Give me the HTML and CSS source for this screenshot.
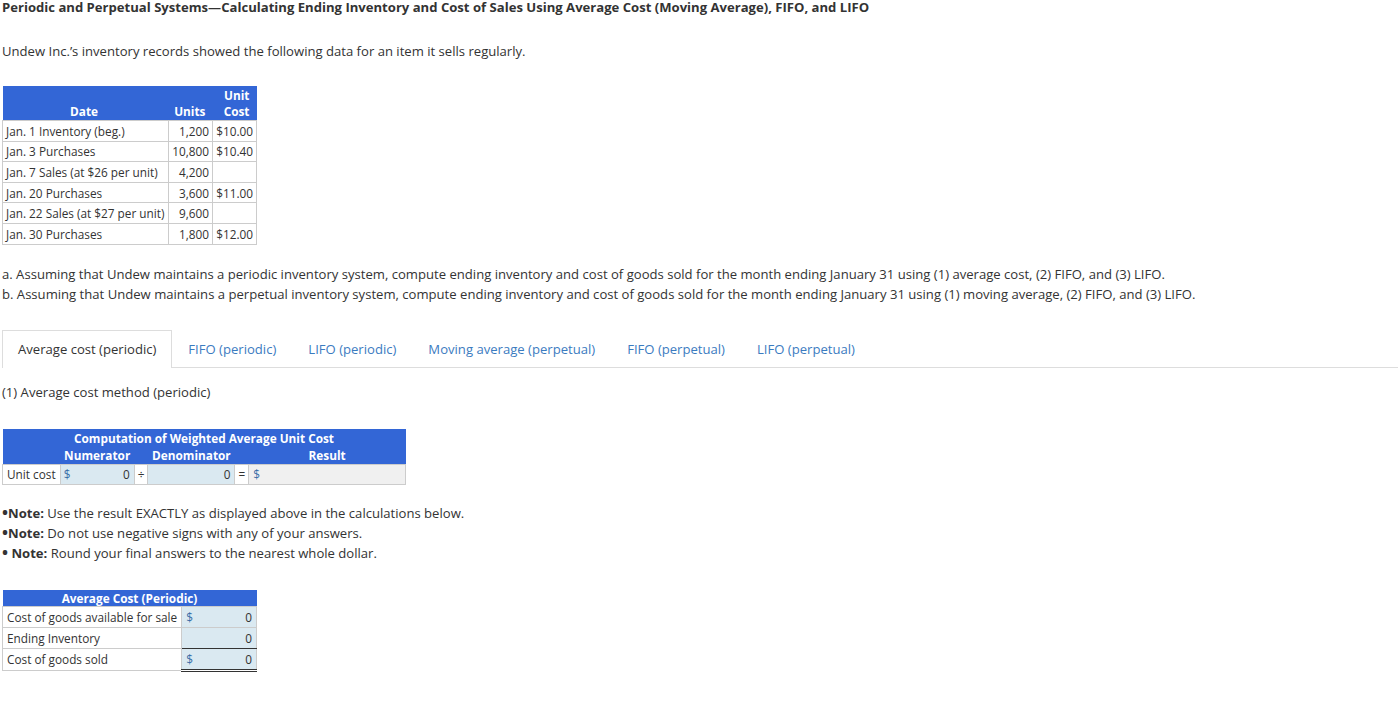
FILE: index.html
```html
<!DOCTYPE html>
<html>
<head>
<meta charset="utf-8">
<link rel="stylesheet" href="styles.css">
</head>
<body>
<h1 class="title">Periodic and Perpetual Systems—Calculating Ending Inventory and Cost of Sales Using Average Cost (Moving Average), FIFO, and LIFO</h1>
<p class="intro">Undew Inc.’s inventory records showed the following data for an item it sells regularly.</p>

<table class="data">
  <thead>
    <tr><th class="c-date">Date</th><th class="c-units">Units</th><th class="c-cost">Unit<br>Cost</th></tr>
  </thead>
  <tbody>
    <tr><td>Jan. 1 Inventory (beg.)</td><td class="num">1,200</td><td class="num">$10.00</td></tr>
    <tr><td>Jan. 3 Purchases</td><td class="num">10,800</td><td class="num">$10.40</td></tr>
    <tr><td>Jan. 7 Sales (at $26 per unit)</td><td class="num">4,200</td><td></td></tr>
    <tr><td>Jan. 20 Purchases</td><td class="num">3,600</td><td class="num">$11.00</td></tr>
    <tr><td>Jan. 22 Sales (at $27 per unit)</td><td class="num">9,600</td><td></td></tr>
    <tr><td>Jan. 30 Purchases</td><td class="num">1,800</td><td class="num">$12.00</td></tr>
  </tbody>
</table>

<div class="questions">
  <p>a. Assuming that Undew maintains a periodic inventory system, compute ending inventory and cost of goods sold for the month ending January 31 using (1) average cost, (2) FIFO, and (3) LIFO.</p>
  <p>b. Assuming that Undew maintains a perpetual inventory system, compute ending inventory and cost of goods sold for the month ending January 31 using (1) moving average, (2) FIFO, and (3) LIFO.</p>
</div>

<div class="tabs">
  <div class="tab active">Average cost (periodic)</div>
  <div class="tab">FIFO (periodic)</div>
  <div class="tab">LIFO (periodic)</div>
  <div class="tab">Moving average (perpetual)</div>
  <div class="tab">FIFO (perpetual)</div>
  <div class="tab">LIFO (perpetual)</div>
</div>

<p class="section">(1) Average cost method (periodic)</p>

<table class="calc">
  <thead>
    <tr><th colspan="6" class="h-title">Computation of Weighted Average Unit Cost</th></tr>
    <tr><th></th><th>Numerator</th><th></th><th>Denominator</th><th></th><th class="h-result">Result</th></tr>
  </thead>
  <tbody>
    <tr>
      <td class="lbl">Unit cost</td>
      <td class="input"><span class="cur">$</span><span class="val">0</span></td>
      <td class="op">÷</td>
      <td class="input den"><span class="val">0</span></td>
      <td class="op">=</td>
      <td class="result"><span class="cur">$</span></td>
    </tr>
  </tbody>
</table>

<div class="notes">
  <p><span class="bullet">•</span><b>Note:</b> Use the result EXACTLY as displayed above in the calculations below.</p>
  <p><span class="bullet">•</span><b>Note:</b> Do not use negative signs with any of your answers.</p>
  <p><span class="bullet">•</span> <b>Note:</b> Round your final answers to the nearest whole dollar.</p>
</div>

<table class="answer">
  <thead>
    <tr><th colspan="2">Average Cost (Periodic)</th></tr>
  </thead>
  <tbody>
    <tr><td class="lbl">Cost of goods available for sale</td><td class="input"><span class="cur">$</span><span class="val">0</span></td></tr>
    <tr class="ending"><td class="lbl">Ending Inventory</td><td class="input"><span class="val">0</span></td></tr>
    <tr class="total"><td class="lbl">Cost of goods sold</td><td class="input"><span class="cur">$</span><span class="val">0</span></td></tr>
  </tbody>
</table>
</body>
</html>
```

FILE: styles.css
```css
body {
  margin: 0;
  padding: 0 2px;
  font-family: "Open Sans", "DejaVu Sans", sans-serif;
  color: #333;
  font-size: 13.1px;
  background: #fff;
}
p { margin: 0; }
.title {
  font-size: 13.1px;
  font-weight: bold;
  margin: 0;
  line-height: 14px;
}
.intro {
  margin-top: 27px;
  line-height: 20px;
}
table { border-collapse: collapse; }
.data {
  margin-top: 25px;
  font-size: 11.8px;
  width: 255px;
}
.data th {
  background: #3366d6;
  color: #fff;
  font-weight: bold;
  text-align: right;
  vertical-align: bottom;
  padding: 1px 7px 1px 4px;
  line-height: 16px;
}
.data th.c-date { text-align: center; }
.data th.c-units { width: 32px; }
.data td {
  border: 1px solid #ccc;
  padding: 0 3px;
  height: 19.6px;
  line-height: 18px;
  white-space: nowrap;
}
.data td.num { text-align: right; }
.questions {
  margin-top: 19px;
  line-height: 20px;
}
.tabs {
  display: flex;
  margin-top: 26px;
  border-bottom: 1px solid #ddd;
}
.tab {
  padding: 0 15px;
  height: 36px;
  line-height: 36px;
  color: #3b7bbf;
  border: 1px solid transparent;
  border-bottom: none;
}
.tab.active {
  color: #333;
  border-color: #ddd;
  background: #fff;
  margin-bottom: -1px;
  height: 37px;
}
.section {
  margin-top: 14px;
  line-height: 20px;
}
.calc {
  margin-top: 27px;
  font-size: 11.8px;
  width: 404px;
}
.calc th {
  background: #3366d6;
  color: #fff;
  font-weight: bold;
  padding: 0;
  line-height: 17px;
}
.calc th.h-title { padding-top: 1px; }
.calc td {
  border: 1px solid #ccc;
  height: 19px;
  padding: 0 4px;
  line-height: 18px;
}
.calc td.lbl { width: 48px; white-space: nowrap; }
.calc td.input { background: #dae9f1; width: 66px; padding-left: 3px; }
.calc td.den { width: 79px; }
.calc td.op { width: 6px; text-align: center; padding: 0 3px; }
.calc td.result { background: #f0f0f0; }
.cur { float: left; color: #3b6fa8; }
.val { float: right; }
.notes {
  margin-top: 18px;
  line-height: 20px;
}
.bullet {
  font-weight: bold;
  font-size: 16px;
  line-height: 10px;
}
.answer {
  margin-top: 27px;
  font-size: 11.8px;
  width: 255px;
}
.answer th {
  background: #3366d6;
  color: #fff;
  font-weight: bold;
  line-height: 16px;
  padding: 0;
}
.answer td {
  border: 1px solid #ccc;
  height: 20px;
  padding: 0 4px;
  line-height: 18px;
}
.answer td.lbl { white-space: nowrap; width: 170px; }
.answer td.input { background: #dae9f1; }
.answer tr.ending td.input { border-bottom: 1px solid #333; }
.answer tr.total td.input { border-bottom: 3px double #333; }
```
